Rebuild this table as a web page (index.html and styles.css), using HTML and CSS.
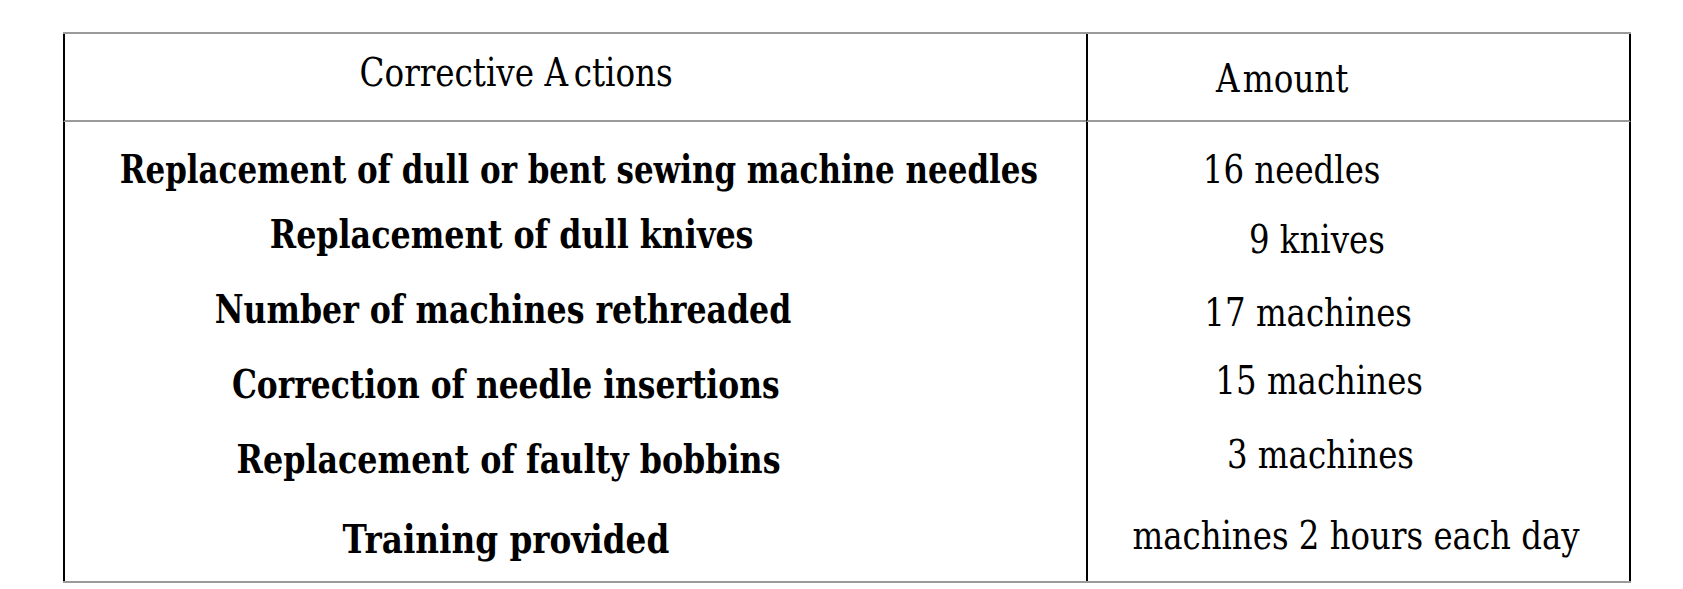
FILE: index.html
```html
<!DOCTYPE html>
<html lang="en">
<head>
<meta charset="utf-8">
<title>Corrective Actions</title>
<link rel="stylesheet" href="styles.css">
</head>
<body>
<div class="page">
  <div class="table">
    <div class="row row--head">
      <div class="cell cell--action"><span class="txt txt--head"><span>Corrective </span><span class="gap-a">A</span><span>ctions</span></span></div>
      <div class="cell cell--amount"><span class="txt txt--head"><span class="gap-b">A</span><span>mount</span></span></div>
    </div>
    <div class="row row--1">
      <div class="cell cell--action"><span class="txt txt--bold">Replacement of dull or bent sewing machine needles</span></div>
      <div class="cell cell--amount"><span class="txt">16 needles</span></div>
    </div>
    <div class="row row--2">
      <div class="cell cell--action"><span class="txt txt--bold">Replacement of dull knives</span></div>
      <div class="cell cell--amount"><span class="txt">9 knives</span></div>
    </div>
    <div class="row row--3">
      <div class="cell cell--action"><span class="txt txt--bold">Number of machines rethreaded</span></div>
      <div class="cell cell--amount"><span class="txt">17 machines</span></div>
    </div>
    <div class="row row--4">
      <div class="cell cell--action"><span class="txt txt--bold">Correction of needle insertions</span></div>
      <div class="cell cell--amount"><span class="txt">15 machines</span></div>
    </div>
    <div class="row row--5">
      <div class="cell cell--action"><span class="txt txt--bold">Replacement of faulty bobbins</span></div>
      <div class="cell cell--amount"><span class="txt">3 machines</span></div>
    </div>
    <div class="row row--6">
      <div class="cell cell--action"><span class="txt txt--bold">Training provided</span></div>
      <div class="cell cell--amount"><span class="txt">machines 2 hours each day</span></div>
    </div>
  </div>
</div>
</body>
</html>
```
FILE: styles.css
```css
html, body {
  margin: 0;
  padding: 0;
  background: #fff;
}

.page {
  padding: 32px 0 0 63px;
  font-family: "DejaVu Serif", "Liberation Serif", serif;
  color: #000;
}

.table {
  width: 1568px;
  border-top: 2px solid #9a9a9a;
  border-bottom: 2px solid #9a9a9a;
}

.row {
  display: grid;
  grid-template-columns: 1023px 545px;
}

.row--head { height: 88px; }
.row--1 { height: 78px; }
.row--2 { height: 75px; }
.row--3 { height: 75px; }
.row--4 { height: 75px; }
.row--5 { height: 75px; }
.row--6 { height: 81px; }

.cell {
  box-sizing: border-box;
  display: flex;
  justify-content: center;
  align-items: flex-start;
  border-left: 2px solid #000;
  overflow: visible;
  white-space: nowrap;
}

.cell--amount {
  border-right: 2px solid #000;
}

.row--head .cell {
  border-bottom: 2px solid #9a9a9a;
}

.txt {
  display: inline-block;
  font-size: 40px;
  line-height: 40px;
  font-weight: normal;
  transform: scaleX(0.81);
}

.txt--bold {
  font-weight: bold;
  transform: scaleX(0.785);
}

.txt--head {
  transform: scaleX(0.815);
}

.gap-a { margin-right: 7px; }
.gap-b { margin-right: 4px; }

/* per-row horizontal fit of the bold labels */
.row--1 .txt--bold { transform: scaleX(0.773); }
.row--2 .txt--bold { transform: scaleX(0.794); }
.row--3 .txt--bold { transform: scaleX(0.79); }
.row--4 .txt--bold { transform: scaleX(0.783); }
.row--5 .txt--bold { transform: scaleX(0.794); }
.row--6 .txt--bold { transform: scaleX(0.817); }

/* header */
.row--head .cell--action { padding: 18px 119px 0 0; }
.row--head .cell--amount { padding: 24px 153px 0 0; }

/* body rows: position of text inside each cell */
.row--1 .cell--action { padding: 27px 0 0 7px; }
.row--1 .cell--amount { padding: 27px 133px 0 0; }

.row--2 .cell--action { padding: 14px 127px 0 0; }
.row--2 .cell--amount { padding: 19px 83px 0 0; }

.row--3 .cell--action { padding: 14px 145px 0 0; }
.row--3 .cell--amount { padding: 17px 101px 0 0; }

.row--4 .cell--action { padding: 14px 139px 0 0; }
.row--4 .cell--amount { padding: 10px 79px 0 0; }

.row--5 .cell--action { padding: 14px 133px 0 0; }
.row--5 .cell--amount { padding: 9px 77px 0 0; }

.row--6 .cell--action { padding: 19px 139px 0 0; }
.row--6 .cell--amount { padding: 15px 5px 0 0; }
```
